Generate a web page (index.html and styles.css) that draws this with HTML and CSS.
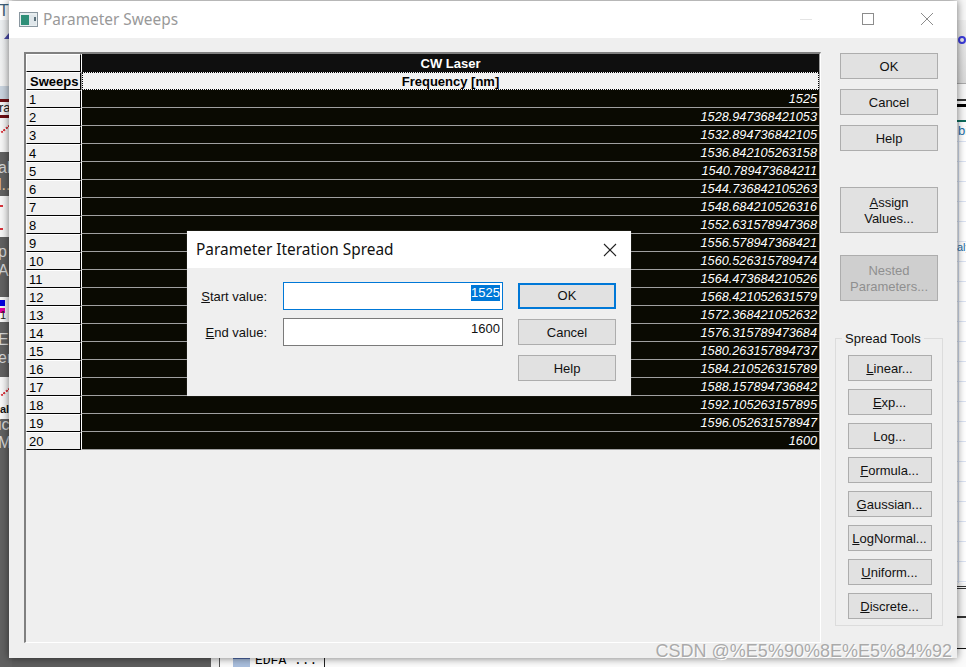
FILE: index.html
```html
<!DOCTYPE html>
<html lang="en">
<head>
  <meta charset="UTF-8">
  <title>Parameter Sweeps</title>
  <link rel="stylesheet" href="styles.css">
</head>
<body>
  <div class="desktop">
    <!-- scraps of the main program showing behind the window -->
    <div class="back-floor"></div>
    <div class="back-left">
      <div class="bl-top"><span class="bl-t">T</span><i class="bl-mark"></i></div>
      <div class="bl-band"></div>
      <div class="bl-red"><span>ra</span></div>
      <div class="bl-icon"></div>
      <div class="bl-dark">
        <span class="bl-a">al</span>
        <span class="bl-b">l..</span>
      </div>
      <div class="bl-icon2"></div>
      <div class="bl-dark2">
        <span class="bl-c">p</span>
        <span class="bl-d">Ar</span>
      </div>
      <div class="bl-bars"><i></i><i></i><span>1</span></div>
      <div class="bl-dark3">
        <span class="bl-e">E</span>
        <span class="bl-f">er</span>
      </div>
      <div class="bl-icon3"><span>al</span></div>
      <div class="bl-dark4">
        <span class="bl-g">ic</span>
        <span class="bl-h">M</span>
      </div>
    </div>
    <div class="back-right">
      <div class="br-top"><span class="br-icon"></span></div>
      <div class="br-rule"></div>
      <div class="br-sheet"><span class="br-bi">bi</span><span class="br-aly">aly</span></div>
      <div class="br-foot"></div>
    </div>
    <div class="back-bottom">
      <span class="tree-icon"></span><span class="tree-text">EDFA ...</span>
    </div>

    <div class="window">
      <div class="titlebar">
        <svg class="app-icon" width="20" height="16" viewBox="0 0 20 16">
          <rect x="0.5" y="0.5" width="18" height="14" fill="#e8eef0" stroke="#8a97a0"/>
          <rect x="2" y="3" width="8" height="10" fill="#2f8f78"/>
          <rect x="10" y="3" width="7" height="10" fill="#dfe6ea"/>
          <rect x="15" y="5" width="2" height="4" fill="#5a6f7a"/>
        </svg>
        <span class="win-title">Parameter Sweeps</span>
        <div class="win-controls">
          <svg width="14" height="14" viewBox="0 0 14 14"><path d="M1 7.5h12" stroke="#e4e4e4"/></svg>
          <svg width="14" height="14" viewBox="0 0 14 14"><rect x="1.5" y="1.5" width="11" height="11" fill="none" stroke="#8c8c8c"/></svg>
          <svg width="14" height="14" viewBox="0 0 14 14"><path d="M1 1l12 12M13 1L1 13" stroke="#8c8c8c"/></svg>
        </div>
      </div>
      <div class="win-body">
        <div class="pane">
          <div class="sheet">
            <div class="corner"></div>
            <div class="col-group">CW Laser</div>
            <div class="row-title">Sweeps</div>
            <div class="col-title">Frequency [nm]</div>

            <div class="row-num">1</div><div class="val">1525</div>
            <div class="row-num">2</div><div class="val">1528.947368421053</div>
            <div class="row-num">3</div><div class="val">1532.894736842105</div>
            <div class="row-num">4</div><div class="val">1536.842105263158</div>
            <div class="row-num">5</div><div class="val">1540.789473684211</div>
            <div class="row-num">6</div><div class="val">1544.736842105263</div>
            <div class="row-num">7</div><div class="val">1548.684210526316</div>
            <div class="row-num">8</div><div class="val">1552.631578947368</div>
            <div class="row-num">9</div><div class="val">1556.578947368421</div>
            <div class="row-num">10</div><div class="val">1560.526315789474</div>
            <div class="row-num">11</div><div class="val">1564.473684210526</div>
            <div class="row-num">12</div><div class="val">1568.421052631579</div>
            <div class="row-num">13</div><div class="val">1572.368421052632</div>
            <div class="row-num">14</div><div class="val">1576.315789473684</div>
            <div class="row-num">15</div><div class="val">1580.263157894737</div>
            <div class="row-num">16</div><div class="val">1584.210526315789</div>
            <div class="row-num">17</div><div class="val">1588.157894736842</div>
            <div class="row-num">18</div><div class="val">1592.105263157895</div>
            <div class="row-num">19</div><div class="val">1596.052631578947</div>
            <div class="row-num">20</div><div class="val">1600</div>
          </div>
        </div>
        <div class="side">
          <button class="btn wide">OK</button>
          <button class="btn wide">Cancel</button>
          <button class="btn wide">Help</button>
          <button class="btn wide tall first-tall"><u>A</u>ssign<br>Values...</button>
          <button class="btn wide tall disabled">Nested<br>Parameters...</button>
          <fieldset class="tools">
            <legend>Spread Tools</legend>
            <button class="btn"><u>L</u>inear...</button>
            <button class="btn"><u>E</u>xp...</button>
            <button class="btn">Lo<u>g</u>...</button>
            <button class="btn"><u>F</u>ormula...</button>
            <button class="btn"><u>G</u>aussian...</button>
            <button class="btn"><u>L</u>ogNormal...</button>
            <button class="btn"><u>U</u>niform...</button>
            <button class="btn"><u>D</u>iscrete...</button>
          </fieldset>
        </div>
      </div>
    </div>

    <div class="dialog">
      <div class="dlg-title">
        <span>Parameter Iteration Spread</span>
        <svg width="14" height="14" viewBox="0 0 14 14"><path d="M1 1l12 12M13 1L1 13" stroke="#222" stroke-width="1.1"/></svg>
      </div>
      <div class="dlg-body">
        <div class="dlg-fields">
          <div class="field">
            <label><u>S</u>tart value:</label>
            <div class="input focus"><span class="sel">1525</span></div>
          </div>
          <div class="field">
            <label><u>E</u>nd value:</label>
            <div class="input">1600</div>
          </div>
        </div>
        <div class="dlg-btns">
          <button class="btn wide default">OK</button>
          <button class="btn wide">Cancel</button>
          <button class="btn wide">Help</button>
        </div>
      </div>
    </div>

    <div class="watermark">CSDN @%E5%90%8E%E5%84%92</div>
  </div>
</body>
</html>
```

FILE: styles.css
```css
* {
  box-sizing: border-box;
}
html,
body {
  margin: 0;
  padding: 0;
}
body {
  font-family: "Liberation Sans", Arial, sans-serif;
  font-size: 13px;
  color: #000;
}
.desktop {
  position: relative;
  width: 966px;
  height: 667px;
  overflow: hidden;
  background: #f4f4f4;
}

/* background program */
.back-floor {
  position: absolute;
  left: 0;
  top: 650px;
  width: 211px;
  height: 17px;
  background: #5e5e5e;
}
.back-left {
  position: absolute;
  left: 0;
  top: 0;
  width: 12px;
  height: 667px;
  background: #616161;
  font-size: 16px;
  overflow: hidden;
}
.back-left > div {
  position: absolute;
  left: 0;
  width: 12px;
  overflow: hidden;
}
.back-left span {
  position: absolute;
  left: -2px;
  color: #d6d6d6;
}
.bl-top {
  top: 0;
  height: 86px;
  background: linear-gradient(#fff 0, #fff 20px, #eceff1 20px, #f2f2f2 86px);
}
.back-left .bl-top .bl-t {
  top: 2px;
  left: -1px;
  color: #40607a;
  font-size: 16px;
}
.bl-mark {
  position: absolute;
  left: 4px;
  top: 33px;
  width: 0;
  height: 0;
  border-left: 5px solid transparent;
  border-bottom: 6px solid #4a4aa8;
}
.bl-band {
  top: 86px;
  height: 13px;
  background: #c9d3de;
}
.bl-red {
  top: 99px;
  height: 19px;
  background: #f4f4f4;
  border-top: 3px solid #6e0f12;
  border-bottom: 3px solid #6e0f12;
}
.back-left .bl-red span {
  top: -2px;
  left: -1px;
  color: #222;
  font-size: 13px;
}
.bl-icon {
  top: 118px;
  height: 34px;
  background: #f6f6f6;
}
.bl-icon::after,
.bl-icon3::after {
  content: "";
  position: absolute;
  left: 0;
  width: 11px;
  height: 2px;
  top: 10px;
  background: repeating-linear-gradient(90deg, #d8323a 0, #d8323a 2px, transparent 2px, transparent 3px);
  transform: rotate(-40deg);
}
.bl-dark {
  top: 152px;
  height: 44px;
}
.bl-a {
  top: 7px;
}
.back-left .bl-b {
  top: 24px;
  color: #e8c9a0;
}
.bl-icon2 {
  top: 196px;
  height: 41px;
  background:
    linear-gradient(#d8323a, #d8323a) 0 9px / 3px 2px no-repeat,
    linear-gradient(#d8323a, #d8323a) 0 32px / 3px 2px no-repeat,
    #f6f6f6;
}
.bl-dark2 {
  top: 237px;
  height: 60px;
}
.bl-c {
  top: 6px;
  left: 0;
}
.bl-d {
  top: 25px;
  left: 0;
}
.bl-bars {
  top: 297px;
  height: 25px;
  background: #f6f6f6;
}
.bl-bars i {
  position: absolute;
  left: 0;
  top: 3px;
  width: 5px;
  height: 6px;
  background: #0000e0;
}
.bl-bars i + i {
  top: 11px;
  height: 5px;
  background: #e000a0;
}
.back-left .bl-bars span {
  top: 12px;
  left: 0;
  font-size: 11px;
  color: #222;
}
.bl-dark3 {
  top: 322px;
  height: 60px;
}
.bl-e {
  top: 9px;
  left: -1px;
}
.bl-f {
  top: 27px;
  left: -1px;
}
.bl-icon3 {
  top: 377px;
  height: 42px;
  background: #f6f6f6;
}
.bl-icon3::after {
  top: 14px;
}
.back-left .bl-icon3 span {
  top: 26px;
  left: 0;
  font-size: 11px;
  font-weight: bold;
  color: #111;
}
.bl-dark4 {
  top: 419px;
  height: 248px;
}
.bl-g {
  top: -3px;
  left: -1px;
}
.bl-h {
  top: 15px;
  left: -1px;
}
.back-right {
  position: absolute;
  left: 950px;
  top: 0;
  width: 16px;
  height: 667px;
  background: #f7f7f7;
}
.back-right > div {
  position: absolute;
  left: 0;
  width: 16px;
  overflow: hidden;
}
.br-top {
  top: 20px;
  height: 64px;
  background: linear-gradient(#eeeeee, #d8d8d8);
  border-bottom: 1px solid #aaa;
}
.br-icon {
  position: absolute;
  left: 8px;
  top: 16px;
  width: 8px;
  height: 8px;
  border: 2px solid #3a3ad8;
  border-radius: 50%;
}
.br-rule {
  top: 99px;
  height: 8px;
  border-top: 2px solid #333;
  border-bottom: 3px solid #000;
}
.br-sheet {
  top: 120px;
  height: 463px;
  border-top: 2px solid #0d6b5a;
  background:
    linear-gradient(90deg, transparent 8px, #d3def0 8px, #d3def0 9px, transparent 9px),
    repeating-linear-gradient(#fff 0, #fff 19px, #dbe3f4 19px, #dbe3f4 20px);
  color: #1f6fa8;
  font-size: 13px;
}
.br-bi {
  position: absolute;
  left: 8px;
  top: 1px;
}
.br-aly {
  position: absolute;
  left: 7px;
  top: 119px;
  font-size: 11px;
}
.br-foot {
  top: 586px;
  height: 63px;
  border-top: 3px double #333;
  border-bottom: 1px solid #111;
  background: linear-gradient(#333, #333) 0 27px / 100% 2px no-repeat #f7f7f7;
}
.back-bottom {
  position: absolute;
  left: 211px;
  right: 0;
  top: 650px;
  height: 17px;
  background: #fbfbfb;
  border-left: 8px solid #efefef;
  font-family: "Liberation Mono", monospace;
  font-size: 13px;
}
.back-bottom::before {
  content: "";
  position: absolute;
  left: 0;
  top: 0;
  height: 17px;
  width: 1px;
  background: #555;
}
.tree-icon {
  position: absolute;
  left: 14px;
  top: 6px;
  width: 17px;
  height: 11px;
  background: #a9bedd;
  border-top: 3px solid #4d68a8;
}
.tree-text {
  position: absolute;
  left: 36px;
  top: 3px;
  width: 70px;
  height: 14px;
  border-right: 1px solid #222;
}

/* main window */
.window {
  position: absolute;
  left: 9px;
  top: 1px;
  width: 948px;
  height: 657px;
  background: #efefef;
  box-shadow: 0 0 8px rgba(0, 0, 0, 0.55);
  display: flex;
  flex-direction: column;
}
.titlebar {
  height: 37px;
  background: #fff;
  display: flex;
  align-items: center;
  padding-left: 10px;
  flex: none;
}
.app-icon {
  margin-right: 4px;
}
.win-title {
  font-family: "Noto Sans", sans-serif;
  font-size: 15.4px;
  color: #999;
}
.win-controls {
  margin-left: auto;
  margin-top: -2px;
  display: flex;
  gap: 46px;
  padding-right: 23px;
}
.win-controls svg:first-child {
  margin-right: 1px;
}
.win-controls svg:nth-child(2) {
  margin-right: -1px;
  margin-left: 1px;
}
.win-body {
  flex: 1;
  display: flex;
  padding: 14px 19px 15px 15px;
  min-height: 0;
}
.pane {
  width: 797px;
  height: 591px;
  border-style: solid;
  border-width: 2px 1px 1px 2px;
  border-color: #808080 #fff #fff #808080;
  flex: none;
}
.sheet {
  display: grid;
  grid-template-columns: 55px 738px;
  grid-auto-rows: 18px;
  background: #a0a0a0;
}
.corner,
.row-title,
.row-num {
  background: #f0f0f0;
  border-top: 1px solid #fff;
  border-left: 1px solid #fff;
  border-right: 1px solid #000;
  border-bottom: 1px solid #000;
  line-height: 16px;
  padding: 1px 0 0 2px;
}
.row-title {
  font-weight: bold;
  padding-left: 3px;
  white-space: nowrap;
}
.col-group {
  background: #0f0f0f;
  color: #fff;
  font-weight: bold;
  text-align: center;
  line-height: 18px;
  padding-top: 1px;
  border-left: 1px solid #fff;
}
.col-title {
  background: #f2f2f2;
  font-weight: bold;
  text-align: center;
  line-height: 16px;
  padding-top: 1px;
  border: 1px dotted #000;
  margin-left: 1px;
}
.val {
  background: #0a0a02;
  color: #fff;
  font-size: 12.7px;
  font-style: italic;
  text-align: right;
  padding: 1px 2px 0 0;
  line-height: 17px;
  border-bottom: 1px solid #a0a0a0;
  border-left: 1px solid #fff;
}
.side {
  margin-left: 19px;
  padding-top: 1px;
  width: 98px;
  display: flex;
  flex-direction: column;
  flex: none;
}
.btn {
  display: block;
  width: 84px;
  height: 26px;
  padding: 2px 0 0;
  margin: 0;
  background: #e1e1e1;
  border: 1px solid #adadad;
  border-radius: 0;
  font-family: "Liberation Sans", Arial, sans-serif;
  font-size: 13px;
  line-height: 16px;
  color: #111;
  text-align: center;
}
.btn.wide {
  width: 98px;
}
.side > .btn + .btn {
  margin-top: 10px;
}
.side > .btn.tall {
  height: 46px;
}
.side > .btn.first-tall {
  margin-top: 36px;
}
.side > .btn.disabled {
  margin-top: 22px;
  background: #cfcfcf;
  color: #8f8f8f;
}
.tools {
  margin: 30px -5px 0;
  padding: 9px 0 0 1px;
  width: 108px;
  height: 295px;
  border: 1px solid #dcdcdc;
  display: flex;
  flex-direction: column;
  align-items: center;
  gap: 8px;
}
.tools legend {
  padding: 0 3px;
  margin-left: 5px;
  font-size: 13px;
  line-height: 15px;
  color: #111;
}

/* dialog */
.dialog {
  position: absolute;
  left: 187px;
  top: 231px;
  width: 444px;
  height: 165px;
  background: #efefef;
  box-shadow: 0 0 1px rgba(120, 120, 120, 0.8);
}
.dlg-title {
  height: 37px;
  background: #fff;
  display: flex;
  align-items: center;
  justify-content: space-between;
  padding: 0 14px 1px 9px;
  font-family: "Noto Sans", sans-serif;
  font-size: 15.4px;
  color: #111;
}
.dlg-title svg {
  margin-top: 1px;
}
.dlg-body {
  display: flex;
  padding: 14px 15px 0 0;
  justify-content: space-between;
}
.dlg-fields {
  display: flex;
  flex-direction: column;
  gap: 8px;
}
.field {
  display: flex;
  align-items: center;
}
.field label {
  width: 96px;
  padding-right: 16px;
  text-align: right;
  font-size: 13px;
  color: #111;
}
.input {
  width: 220px;
  height: 28px;
  background: #fff;
  border: 1px solid #7a7a7a;
  text-align: right;
  padding: 2px 2px 0 0;
  font-size: 13px;
  line-height: 15px;
  color: #111;
}
.input.focus {
  border-color: #0078d7;
}
.sel {
  background: #0078d7;
  color: #fff;
  display: inline-block;
  height: 16px;
}
.dlg-btns {
  display: flex;
  flex-direction: column;
  gap: 10px;
  padding-top: 1px;
}
.btn.default {
  border: 2px solid #0078d7;
  padding-top: 0;
}

.watermark {
  position: absolute;
  right: 14px;
  bottom: 6px;
  font-size: 18px;
  line-height: 20px;
  color: #aaa;
  text-shadow: 1px 1px 0 #fff;
  white-space: nowrap;
}
```
